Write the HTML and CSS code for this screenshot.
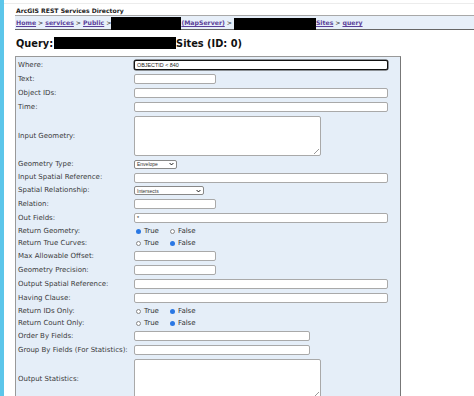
FILE: index.html
```html
<!DOCTYPE html>
<html>
<head>
<meta charset="utf-8">
<link rel="stylesheet" href="styles.css">
</head>
<body>
<div class="page">
  <div class="topline"></div>
  <div class="title">ArcGIS REST Services Directory</div>
  <div class="crumbs">
    <a href="#">Home</a> &gt; <a href="#">services</a> &gt; <a href="#">Public</a> &gt; <span class="redact r1"></span><a href="#">(MapServer)</a> &gt; <span class="redact r2"></span><a href="#">Sites</a> &gt; <a href="#">query</a>
  </div>
  <h2 class="heading">Query:<span class="redact r3"></span>Sites (ID: 0)</h2>
  <div class="form">
    <table class="ftable">
      <tr><td class="lbl">Where:</td><td><div class="inp full focus">OBJECTID &lt; 840</div></td></tr>
      <tr><td class="lbl">Text:</td><td><div class="inp short"></div></td></tr>
      <tr><td class="lbl">Object IDs:</td><td><div class="inp full"></div></td></tr>
      <tr><td class="lbl">Time:</td><td><div class="inp full"></div></td></tr>
      <tr><td class="lbl">Input Geometry:</td><td><div class="ta"><span class="grip"></span></div></td></tr>
      <tr class="srow"><td class="lbl">Geometry Type:</td><td><div class="sel s1">Envelope<svg class="chev" viewBox="0 0 8 5"><path d="M1 1 L4 4 L7 1" fill="none" stroke="#111" stroke-width="1.6"/></svg></div></td></tr>
      <tr><td class="lbl">Input Spatial Reference:</td><td><div class="inp full"></div></td></tr>
      <tr class="srow"><td class="lbl">Spatial Relationship:</td><td><div class="sel s2">Intersects<svg class="chev" viewBox="0 0 8 5"><path d="M1 1 L4 4 L7 1" fill="none" stroke="#111" stroke-width="1.6"/></svg></div></td></tr>
      <tr><td class="lbl">Relation:</td><td><div class="inp short"></div></td></tr>
      <tr><td class="lbl">Out Fields:</td><td><div class="inp full">*</div></td></tr>
      <tr class="rrow"><td class="lbl">Return Geometry:</td><td><span class="radio on"></span><span class="rt">True</span><span class="radio"></span><span class="rt">False</span></td></tr>
      <tr class="rrow"><td class="lbl">Return True Curves:</td><td><span class="radio"></span><span class="rt">True</span><span class="radio on"></span><span class="rt">False</span></td></tr>
      <tr><td class="lbl">Max Allowable Offset:</td><td><div class="inp short"></div></td></tr>
      <tr><td class="lbl">Geometry Precision:</td><td><div class="inp short"></div></td></tr>
      <tr><td class="lbl">Output Spatial Reference:</td><td><div class="inp full"></div></td></tr>
      <tr><td class="lbl">Having Clause:</td><td><div class="inp full"></div></td></tr>
      <tr class="rrow"><td class="lbl">Return IDs Only:</td><td><span class="radio"></span><span class="rt">True</span><span class="radio on"></span><span class="rt">False</span></td></tr>
      <tr class="rrow"><td class="lbl">Return Count Only:</td><td><span class="radio"></span><span class="rt">True</span><span class="radio on"></span><span class="rt">False</span></td></tr>
      <tr><td class="lbl">Order By Fields:</td><td><div class="inp mid"></div></td></tr>
      <tr><td class="lbl">Group By Fields (For Statistics):</td><td><div class="inp mid"></div></td></tr>
      <tr><td class="lbl">Output Statistics:</td><td><div class="ta"><span class="grip"></span></div></td></tr>
    </table>
  </div>
</div>
</body>
</html>
```

FILE: styles.css
```css
html, body {
  margin: 0;
  padding: 0;
  background: #ffffff;
  overflow: hidden;
}
.page {
  border-left: 4px solid #5cc6ea;
  min-height: 396px;
  font-family: "DejaVu Sans", Verdana, sans-serif;
  color: #222;
}
.topline {
  height: 3px;
  border-bottom: 1px solid #ececec;
}
.title {
  font-weight: bold;
  font-size: 6.1px;
  margin: 2px 0 0 12px;
  height: 9px;
  line-height: 9px;
  color: #222;
}
.crumbs {
  margin-left: 11px;
  height: 13px;
  line-height: 13px;
  background: #e7eff9;
  border-top: 1px solid #a8a8a8;
  border-bottom: 1px solid #666;
  font-size: 6.2px;
  padding-left: 1px;
  white-space: nowrap;
}
.crumbs a {
  color: #5b3f9a;
  font-weight: bold;
  text-decoration: underline;
}
.redact {
  display: inline-block;
  background: #000;
  vertical-align: middle;
}
.r1 { width: 70px; height: 13px; margin-left: -2px; }
.r2 { width: 82px; height: 12px; margin-top: 1px; }
.r3 { width: 122px; height: 12px; vertical-align: -2px; }
.heading {
  margin: 0 0 0 12px;
  padding-top: 7px;
  height: 19px;
  font-size: 9.8px;
  font-weight: bold;
  line-height: 12px;
  color: #111;
  white-space: nowrap;
}
.heading .r3 { margin-left: 1px; }
.form {
  margin-left: 11px;
  width: 382px;
  border: 1px solid #999;
  border-right-color: #777;
  background: #e5eef8;
  padding: 1px 0 0 2px;
}
.ftable {
  border-collapse: collapse;
  font-size: 7px;
  color: #3a3a3a;
}
.ftable td {
  padding: 2px 0;
  vertical-align: middle;
}
.ftable td.lbl {
  width: 116px;
  white-space: nowrap;
  line-height: 9px;
}
.ftable tr.rrow td {
  padding: 0;
  height: 12px;
}
.ftable tr.srow td {
  padding: 0;
  height: 12.5px;
}
.inp {
  box-sizing: border-box;
  height: 10px;
  background: #fff;
  border: 1px solid #a9a9a9;
  border-radius: 2px;
  font-family: "Liberation Sans", Arial, sans-serif;
  font-size: 5.4px;
  line-height: 8px;
  padding-left: 2px;
  color: #222;
}
.inp.full { width: 254px; }
.inp.short { width: 82px; }
.inp.mid { width: 176px; }
.inp.focus {
  border: 1px solid #111;
  box-shadow: 0 0 0 0.5px #333;
}
.ta {
  position: relative;
  box-sizing: border-box;
  width: 187px;
  height: 40px;
  background: #fff;
  border: 1px solid #a9a9a9;
  border-radius: 2px;
}
.grip {
  position: absolute;
  right: 1px;
  bottom: 1px;
  width: 5px;
  height: 5px;
  background: linear-gradient(135deg, transparent 45%, #999 46%, #999 54%, transparent 55%, transparent 70%, #999 71%, #999 79%, transparent 80%);
}
.sel {
  box-sizing: border-box;
  display: flex;
  align-items: center;
  justify-content: space-between;
  height: 9px;
  background: #fff;
  border: 1px solid #888;
  border-radius: 2px;
  font-family: "Liberation Sans", Arial, sans-serif;
  font-size: 5px;
  padding: 0 2px;
  color: #333;
}
.sel.s1 { width: 43px; }
.sel.s2 { width: 70px; }
.chev {
  width: 5px;
  height: 4px;
}
.radio {
  display: inline-block;
  box-sizing: border-box;
  width: 5px;
  height: 5px;
  border-radius: 50%;
  border: 0.7px solid #888;
  background: #fff;
  margin-left: 2px;
  vertical-align: -0.5px;
}
.radio.on {
  border: none;
  background: #2a78e4;
}
.rt {
  display: inline-block;
  margin-left: 3px;
  width: 24px;
  font-size: 7px;
  color: #333;
}
```
